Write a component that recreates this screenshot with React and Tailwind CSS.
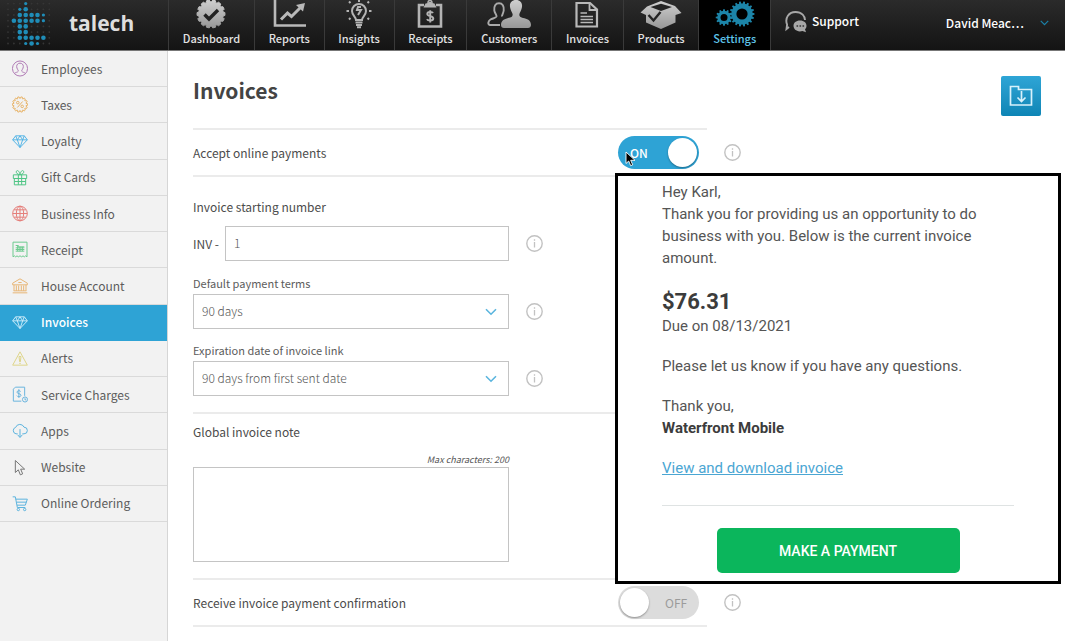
import React from 'react';

function toothed(cx, cy, outer, inner, teeth, duty = 0.5) {
  const pts = [];
  const step = (Math.PI * 2) / teeth;
  for (let i = 0; i < teeth; i++) {
    const a = i * step;
    const half = (step * duty) / 2;
    [
      [a - half * 1.25, inner],
      [a - half * 0.75, outer],
      [a + half * 0.75, outer],
      [a + half * 1.25, inner],
    ].forEach(([t, r]) => pts.push(`${(cx + r * Math.cos(t)).toFixed(2)},${(cy + r * Math.sin(t)).toFixed(2)}`));
  }
  return pts.join(' ');
}

const LOGO_ROWS = [
  '..o...',
  '.oO...',
  '.OOOOo',
  'OOOOOo',
  '.OO...',
  '.OO...',
  '.OOOOO',
  '..oOo.',
];

function Logo() {
  const faint = [];
  for (let r = 0; r < 8; r++) for (let c = 0; c < 8; c++) faint.push([c, r]);
  return (
    <svg width="48" height="50" viewBox="0 0 48 50" aria-hidden="true">
      {faint.map(([c, r]) => (
        <circle key={`${c}-${r}`} cx={2 + c * 5.9} cy={3.6 + r * 5.7} r="0.9" fill="#363636" />
      ))}
      {LOGO_ROWS.map((row, r) =>
        row.split('').map((ch, c) =>
          ch === '.' ? null : (
            <circle key={`${r}-${c}`} cx={7.9 + c * 5.9} cy={3.6 + r * 5.7} r={ch === 'O' ? 2.3 : 1.6} fill="#1f8db8" />
          ),
        ),
      )}
    </svg>
  );
}

const topIcons = {
  Dashboard: (
    <svg width="36" height="29" viewBox="0 0 36 29" fill="none">
      <polygon points={toothed(18, 14, 14, 12.3, 14, 0.6)} fill="url(#steel)" stroke="url(#steel)" strokeLinejoin="round" />
      <path d="M11.5 14.5l4.5 4.5 9-9" stroke="#222" strokeWidth="3.4" />
    </svg>
  ),
  Reports: (
    <svg width="36" height="29" viewBox="0 0 36 29" fill="none" stroke="#b9b9b9">
      <path d="M4 0v25.500h31" strokeWidth="2.600" />
      <path d="M10 19.500l6.500-6.500 4 3.500 10-10" strokeWidth="3" />
      <path d="M25 5l9-2-2 8.500z" fill="#b9b9b9" stroke="none" />
    </svg>
  ),
  Insights: (
    <svg width="36" height="29" viewBox="0 0 36 29" fill="none" stroke="#b4b4b4" strokeWidth="2">
      <path d="M15 20c0-3-4-4.500-4-9a7 7 0 0 1 14 0c0 4.500-4 6-4 9z" />
      <path d="M20 7h-3l-1 3h4l-3 5M14.500 22.500h7M15 25h6M16 27.300h4" />
      <path d="M18 0v2M9.500 3L8 1.500M26.500 3L28 1.500M8 11H5.500M28 11h2.500M9.500 18L8 19.500M26.500 18l1.500 1.500" />
    </svg>
  ),
  Receipts: (
    <svg width="36" height="29" viewBox="0 0 36 29" fill="none" stroke="#b4b4b4">
      <path d="M12 5H7v21.500h22V5h-5" strokeWidth="2.600" />
      <path d="M11.500 7.500h13l-2-4-2.500-.5a2.200 2.200 0 0 0-4 0l-2.500.5z" fill="#b4b4b4" stroke="none" />
      <circle cx="18" cy="2.500" r="2" strokeWidth="1.500" />
      <path d="M21 13c-.7-1.400-5.700-1.700-5.700 1 0 2.800 6 1.600 6 4.500 0 2.800-5.600 2.500-6.300.6M18.200 10.300v12.200" strokeWidth="1.900" />
    </svg>
  ),
  Customers: (
    <svg width="46" height="29" viewBox="0 0 46 29" fill="none">
      <path
        d="M14 25H4c-3-.5-1.500-4.500.5-5.500 2.500-1.200 5.500-1.500 6-3 .3-1.500-1.700-3-2.200-6C7.800 6 9.500 3.300 13 3.300s5.200 2.700 4.700 7.200c-.4 3-2 4.500-1.700 6"
        stroke="#aaa"
        strokeWidth="1.900"
      />
      <path
        d="M30 0c4.500 0 6.500 3 6 7-.4 3-2 5-2.600 7-.3 2.700 1 3.200 5.100 4.200 4 1 6.500 3 6.500 6.800 0 2-1.500 3-3 3H18c-1.800 0-3-1-3-3 0-3.800 2.500-5.800 6.500-6.800 4.100-1 5.400-1.500 5.100-4.200-.6-2-2.200-4-2.600-7-.5-4 1.500-7 6-7z"
        fill="url(#steel)"
      />
    </svg>
  ),
  Invoices: (
    <svg width="36" height="29" viewBox="0 0 36 29" fill="none" stroke="#b9b9b9">
      <path d="M7.500 3h13.500l7 6.500v17H7.500z" strokeWidth="2.200" />
      <path d="M20.500 3v7h7.500" strokeWidth="1.800" />
      <path d="M11.500 13h6.500M11.500 16.500h12.500M11.500 19.500h12.500M11.500 22.500h12.500" strokeWidth="1.700" />
    </svg>
  ),
  Products: (
    <svg width="42" height="29" viewBox="0 0 42 29">
      <path d="M7 6.500L21 1l14 5 6.500 7-6 2v7.500L21 29 6 22.500V15L.500 12.500z" fill="url(#steel)" />
      <path d="M10.500 7L21 3.800 32 7l-11 4z" fill="#242424" />
      <path d="M8.500 15l5 5.500 7-8.500" fill="none" stroke="#242424" strokeWidth="2.400" />
    </svg>
  ),
  Settings: (
    <svg width="40" height="29" viewBox="0 0 40 29" fill="none">
      <polygon points={toothed(27, 14, 12.500, 10.600, 18, 0.500)} fill="#1c84a8" />
      <circle cx="27" cy="14" r="5.600" fill="#000" />
      <polygon points={toothed(9, 17.500, 8.300, 6.700, 12, 0.500)} fill="#1c84a8" />
      <circle cx="9" cy="17.500" r="3.500" fill="#000" />
    </svg>
  ),
};

const TOP_ITEMS = ['Dashboard', 'Reports', 'Insights', 'Receipts', 'Customers', 'Invoices', 'Products', 'Settings'];

const diamond = (
  <>
    <path d="M5.500 3.500h13l4.500 6L12 21 1 9.500z" />
    <path d="M1 9.500h22M5.500 3.500l2.500 6L12 21l4-11.500 2.500-6M8 9.500l4-6 4 6" />
  </>
);

const SIDE_ITEMS = [
  ['Employees', 'text-[#b07ab5]', (
    <>
      <circle cx="12" cy="12" r="11.300" />
      <path d="M4 19.500c1-2 4.500-1.500 5.500-3.500.3-1.500-2.500-3.500-2.500-7 0-3 2-5 5-5s5 2 5 5c0 3.500-2.800 5.500-2.500 7 1 2 4.500 1.500 5.500 3.500" />
    </>
  )],
  ['Taxes', 'text-[#e8b469]', (
    <>
      <polygon points={toothed(12, 12, 11.500, 9.300, 14, 0.600)} strokeLinejoin="round" />
      <path d="M16 7.500l-8 9" />
      <circle cx="8.700" cy="9.200" r="1.900" />
      <circle cx="15.300" cy="14.800" r="1.900" />
    </>
  )],
  ['Loyalty', 'text-[#55b5e6]', diamond],
  ['Gift Cards', 'text-[#4fc585]', (
    <path d="M2 8h20v5.500H2zM3.500 13.500h17v9.500h-17zM9.500 8v15M14.500 8v15M12 8C8 7 6 5.500 6.500 3S11 1 12 8c1-7 5-7.500 5.500-5S16 7 12 8zM3.500 18h17" />
  )],
  ['Business Info', 'text-[#e57f7b]', (
    <>
      <circle cx="12" cy="12" r="11" />
      <ellipse cx="12" cy="12" rx="5.500" ry="11" />
      <path d="M12 1v22M1 12h22M3 6.500h18M3 17.500h18" />
    </>
  )],
  ['Receipt', 'text-[#6dcb8f]', (
    <>
      <path d="M1.500 1h21v22l-2-1.500-2 1.500-2-1.500-2 1.500-2.500-1.500L9.500 23l-2-1.500-2 1.500-2-1.500-2 1.500z" />
      <path d="M5.500 6h4v2h9M5.500 9.500h13M5.500 12h13M5.500 14.500h13M8.500 6v8.500M12 8v6.500M15.500 8v6.500" />
    </>
  )],
  ['House Account', 'text-[#e8b676]', (
    <path d="M12 2L1 8.500V11h22V8.500zM3 11v9M21 11v9M6.500 12v8M10 12v8M14 12v8M17.500 12v8M2.500 20h19M1 23h22M9.500 7.500h5" />
  )],
  ['Invoices', 'text-[#c7e9f8]', diamond],
  ['Alerts', 'text-[#ded58a]', (
    <>
      <path d="M12 2L1 22h22z" />
      <path d="M10.500 9h3l-1 8h-1zM11 19.500h2" />
    </>
  )],
  ['Service Charges', 'text-[#6bb5de]', (
    <>
      <path d="M14 22H2V4l3-3h14v13" />
      <path d="M13 7.500c-1-2-5.500-1.700-5.500 1 0 3 6 1.700 6 4.700 0 2.800-5.500 2.800-6.200.5M10.300 4v13" />
      <circle cx="19.500" cy="19.500" r="3.800" />
      <path d="M19.500 17.500v2.500h2" />
    </>
  )],
  ['Apps', 'text-[#5db4de]', (
    <path d="M8.500 17H6a5 5 0 0 1-.5-9.700A6.700 6.700 0 0 1 18 7a5 5 0 0 1 0 10h-2.500M12 10v12M8.500 18.500L12 22.500l3.500-4" />
  )],
  ['Website', 'text-[#777]', <path d="M5 1.500v18l4.500-4 3 7.500 3.500-1.500-3-7H19z" />],
  ['Online Ordering', 'text-[#5db4de]', (
    <>
      <path d="M1 2h4l3 16h12M5.500 5.500H23l-3 9H7.500M7 10h14.500" />
      <circle cx="9.500" cy="21" r="1.800" />
      <circle cx="19" cy="21" r="1.800" />
    </>
  )],
];

function InfoButton({ about }) {
  return (
    <button type="button" aria-label={`About ${about}`} className="shrink-0 text-[#c2c2c2]">
      <svg width="17" height="17" viewBox="0 0 17 17" fill="none" stroke="currentColor">
        <circle cx="8.500" cy="8.500" r="7.700" strokeWidth="1.400" />
        <path d="M8.500 7v5.500M8.500 4.300v1.400" strokeWidth="1.300" />
      </svg>
    </button>
  );
}

function Chevron({ className }) {
  return (
    <svg className={className} width="12" height="8" viewBox="0 0 12 8" fill="none" stroke="currentColor" strokeWidth="1.600">
      <path d="M1 1.200l5 5 5-5" />
    </svg>
  );
}

function Toggle({ id, on }) {
  const [checked, setChecked] = React.useState(on);
  return (
    <label
      htmlFor={id}
      className={`flex h-[33px] w-[81px] cursor-pointer items-center rounded-full text-[12px] ${
        checked ? 'flex-row bg-[#2ea3d5] pr-0.5 text-white' : 'flex-row-reverse bg-[#dcdcdc] pl-0.5 text-[#9b9b9b]'
      }`}
    >
      <input
        id={id}
        type="checkbox"
        role="switch"
        checked={checked}
        onChange={() => setChecked(!checked)}
        className="sr-only"
      />
      <span className={`flex-1 ${checked ? 'pl-3 font-medium' : 'pl-4'}`}>{checked ? 'ON' : 'OFF'}</span>
      <span className="size-[29px] rounded-full bg-white shadow-[0_1px_2px_rgba(0,0,0,0.35)]" />
    </label>
  );
}

function SwitchRow({ id, label, on }) {
  return (
    <div className="flex items-center gap-[17px]">
      <div className="flex h-[49px] w-[514px] items-center justify-between border-y-2 border-[#ebebeb] pr-2">
        <label htmlFor={id}>{label}</label>
        <Toggle id={id} on={on} />
      </div>
      <InfoButton about={label} />
    </div>
  );
}

function SelectField({ id, label, options }) {
  return (
    <div>
      <label htmlFor={id} className="block text-[11px] leading-[18px] text-[#5c5c5c]">
        {label}
      </label>
      <div className="mt-0.5 flex items-center gap-[17px]">
        <div className="relative w-[316px]">
          <select
            id={id}
            className="block h-[35px] w-full appearance-none border border-[#c4c4c4] bg-white px-2 pb-0.5 text-[12px] font-light text-[#555]"
          >
            {options.map((o) => (
              <option key={o}>{o}</option>
            ))}
          </select>
          <Chevron className="pointer-events-none absolute top-3.5 right-3 text-[#5ab5de]" />
        </div>
        <InfoButton about={label} />
      </div>
    </div>
  );
}

function Header() {
  return (
    <header className="flex h-[51px] border-b border-[#777] bg-linear-to-b from-[#2b2b2b] to-[#141414]">
      <a href="#home" className="flex w-[168px] shrink-0 items-start gap-[15px] pl-1.5">
        <Logo />
        <span className="pt-[9px] font-['Open_Sans',sans-serif] text-[21px] leading-[28px] font-bold text-[#dedede]">talech</span>
      </a>
      <nav className="flex w-[603px] shrink-0" aria-label="Primary">
        {TOP_ITEMS.map((name) => (
          <a
            key={name}
            href={`#${name.toLowerCase()}`}
            className={`flex flex-auto flex-col items-center border-l border-[#3a3a3a] px-3 ${
              name === 'Settings' ? 'border-r bg-black text-[#5fc4ea]' : 'text-[#e2e2e2]'
            }`}
          >
            <span className="flex h-[29px] w-0 justify-center">
              <span className="shrink-0">{topIcons[name]}</span>
            </span>
            <span className="text-[11px] leading-[18px] font-medium">{name}</span>
          </a>
        ))}
      </nav>
      <a href="#support" className="flex h-[42px] items-center gap-1 pl-3.5 text-[12px] font-medium text-white">
        <svg width="23" height="23" viewBox="0 0 23 23" fill="none">
          <path d="M4 17l-2.500 2 .6-4.500C-.5 8 4 2 10.500 2S20 6.500 20 10" stroke="#a8a8a8" strokeWidth="1.900" />
          <path d="M15 10.500c4 0 6.500 2.300 6.500 5.300 0 1.500-.5 2.700-1.500 3.500l1 3-3.500-1.300c-5.500 1.500-9-1.700-9-5.200 0-3 2.500-5.300 6.500-5.300z" fill="#a8a8a8" />
          <path d="M11.500 16h1.600M14.500 16h1.600M17.500 16h1.600" stroke="#333" strokeWidth="1.500" />
        </svg>
        Support
      </a>
      <button type="button" className="ml-auto flex h-[46px] items-center gap-4 pr-4 text-[12px] font-medium text-white">
        <span>David Meac…</span>
        <Chevron className="w-[9px] text-[#1b81a8]" />
      </button>
    </header>
  );
}

function Sidebar() {
  return (
    <aside className="w-[168px] shrink-0 border-r border-[#d6d6d6] bg-[#f2f2f2]">
      <nav className="grid h-[471px] auto-rows-fr" aria-label="Settings">
        {SIDE_ITEMS.map(([name, tone, art], i) => {
          const active = name === 'Invoices';
          return (
            <a
              key={i}
              href={`#${name.toLowerCase().replace(' ', '-')}`}
              aria-current={active ? 'page' : undefined}
              className={`flex items-center gap-[13px] border-b pl-3 text-[12px] ${
                active ? 'border-[#2ea3d5] bg-[#2ea3d5] font-medium text-white' : 'border-[#dadada] text-[#5c5c5c]'
              }`}
            >
              <svg className={tone} width="16" height="17" viewBox="0 0 24 24" fill="none" stroke="currentColor" strokeWidth="1.500">
                {art}
              </svg>
              {name}
            </a>
          );
        })}
      </nav>
    </aside>
  );
}

function EmailPreview() {
  return (
    <section
      aria-label="Email preview"
      className="absolute top-[122px] left-[447px] w-[446px] border-3 border-black bg-white px-11 pt-[5px] pb-2 font-[Roboto,sans-serif] text-[15px] leading-[22px] text-[#555]"
    >
      <p>
        Hey Karl,
        <br />
        Thank you for providing us an opportunity to do
        <br />
        business with you. Below is the current invoice
        <br />
        amount.
      </p>
      <p className="mt-5 text-[22px] leading-[26px] font-bold text-[#3c3c3c]">$76.31</p>
      <p>Due on 08/13/2021</p>
      <p className="mt-[18px]">Please let us know if you have any questions.</p>
      <p className="mt-[18px]">Thank you,</p>
      <p className="font-bold text-[#3c3c3c]">Waterfront Mobile</p>
      <p className="mt-[18px]">
        <a href="#invoice" className="text-[#4ba6d3] underline">
          View and download invoice
        </a>
      </p>
      <hr className="mt-[26px] border-[#dfe3e3]" />
      <button
        type="button"
        className="mx-auto mt-[22px] block h-[45px] w-[243px] rounded-[5px] bg-[#0bb65c] text-[14px] font-medium text-white"
      >
        MAKE A PAYMENT
      </button>
    </section>
  );
}

export default function App() {
  return (
    <div className="flex min-h-screen flex-col bg-white font-['Noto_Sans_CJK_SC',sans-serif] text-[12px] leading-5 text-[#4c4c4c]">
      <svg className="absolute size-0" aria-hidden="true">
        <defs>
          <linearGradient id="steel" x1="0" y1="0" x2="0" y2="1">
            <stop offset="0" stopColor="#cfcfcf" />
            <stop offset="1" stopColor="#979797" />
          </linearGradient>
        </defs>
      </svg>
      <Header />
      <div className="flex flex-1">
        <Sidebar />
        <main className="relative min-w-0 flex-1 pr-6 pl-[25px]">
          <div className="flex h-[77px] items-start justify-between pt-[25px]">
            <h1 className="text-[21px] leading-[28px] font-bold text-[#444]">Invoices</h1>
            <button
              type="button"
              aria-label="Import invoices"
              className="flex size-10 items-center justify-center rounded-[2px] bg-linear-to-b from-[#2ea5d6] to-[#0d85b5] text-[#d8f1fb]"
            >
              <svg width="24" height="24" viewBox="0 0 24 24" fill="none" stroke="currentColor" strokeWidth="1.700">
                <path d="M1.500 21V2.500h8v3h13V21z" />
                <path d="M12.500 7v10M8.500 13.500l4 4 4-4" />
              </svg>
            </button>
          </div>

          <SwitchRow id="accept" label="Accept online payments" on />

          <div className="mt-5">
            <label htmlFor="start" className="block">
              Invoice starting number
            </label>
            <div className="mt-[9px] flex items-center gap-[17px]">
              <div className="flex w-[316px] items-center gap-1.5">
                <span className="shrink-0">INV -</span>
                <input
                  id="start"
                  type="text"
                  defaultValue="1"
                  className="h-[35px] min-w-0 flex-1 border border-[#c4c4c4] px-2 pb-0.5 font-light text-[#555]"
                />
              </div>
              <InfoButton about="Invoice starting number" />
            </div>
          </div>

          <div className="mt-[13px] grid gap-3">
            <SelectField id="terms" label="Default payment terms" options={['90 days', '60 days', '30 days']} />
            <SelectField
              id="expiry"
              label="Expiration date of invoice link"
              options={['90 days from first sent date', '60 days from first sent date']}
            />
          </div>

          <div className="mt-4 w-[514px] border-t-2 border-[#ebebeb] pt-2">
            <label htmlFor="note" className="block">
              Global invoice note
            </label>
            <div className="w-[316px]">
              <p className="mt-[11px] text-right text-[9px] leading-[14px] text-[#555] italic">Max characters: 200</p>
              <textarea id="note" className="block h-[95px] w-full resize-none border border-[#c4c4c4] p-2" />
            </div>
          </div>

          <div className="mt-4">
            <SwitchRow id="confirm" label="Receive invoice payment confirmation" on={false} />
          </div>

          <EmailPreview />
          <svg className="pointer-events-none absolute top-[100px] left-[457px]" width="11" height="16" viewBox="0 0 11 16">
            <path d="M1 1v11.500l2.700-2.500 2 4.700 2-.9-2-4.500H10z" fill="#000" stroke="#fff" strokeWidth="0.900" />
          </svg>
        </main>
      </div>
    </div>
  );
}
